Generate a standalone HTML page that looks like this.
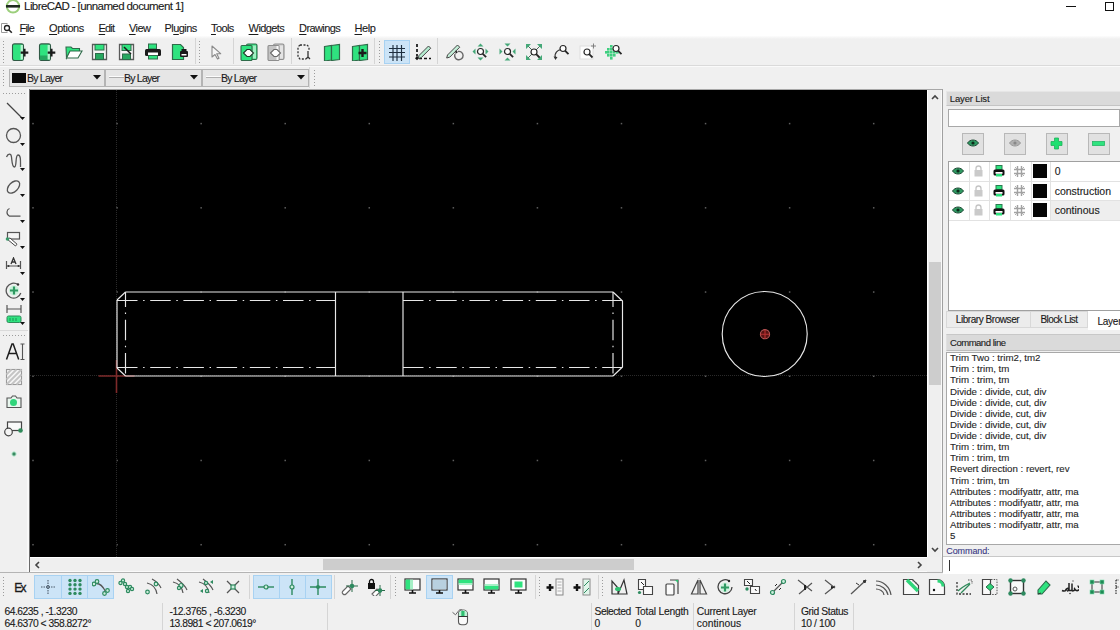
<!DOCTYPE html>
<html><head><meta charset="utf-8">
<style>
*{box-sizing:border-box}
html,body{margin:0;padding:0}
body{width:1120px;height:630px;overflow:hidden;position:relative;background:#f0f0f0;font-family:"Liberation Sans",sans-serif;font-size:11px;color:#000}
.a{position:absolute}
.t{position:absolute;white-space:nowrap;font-size:11px;letter-spacing:-0.3px;line-height:13px;color:#1a1a1a}
.mi u{text-decoration:underline}
.vs{position:absolute;width:1px;background:#d5d5d5}
.hdl{position:absolute;width:1px;background:repeating-linear-gradient(#9c9c9c 0 1px,transparent 1px 3px)}
.hhdl{position:absolute;height:1px;background:repeating-linear-gradient(90deg,#9c9c9c 0 1px,transparent 1px 3px)}
.hl{position:absolute;background:#cce4f7;border:1px solid #a8d2f2}
.cb{position:absolute;background:#e6e6e6;border:1px solid #b4b4b4}
.cmd{position:absolute;left:950px;font-size:9.5px;line-height:11.125px;color:#222;white-space:nowrap}
.st{position:absolute;font-size:10px;letter-spacing:-0.3px;line-height:12.5px;color:#222;white-space:nowrap}
</style></head><body>

<div class="a" style="left:0;top:0;width:1120px;height:39px;background:linear-gradient(#fff 0,#fff 35.5px,#f0f0f0 39px)"></div>
<svg class="a" style="left:5px;top:-1px" width="16" height="15" viewBox="0 0 16 15"><circle cx="8" cy="7.3" r="6.2" fill="none" stroke="#9ccf7c" stroke-width="2"/><rect x="1" y="6" width="14" height="2.6" fill="#1f2a1f"/></svg>
<div class="a" style="left:24.1px;top:1.27px;font-size:11.5px;line-height:11.5px;letter-spacing:-0.597px;color:#1a1a1a;white-space:nowrap;-webkit-text-stroke:0.12px currentColor">LibreCAD - [unnamed document 1]</div>
<div class="a" style="left:1066px;top:6px;width:10px;height:1px;background:#111"></div>
<div class="a" style="left:1105px;top:2px;width:9px;height:9px;border:1px solid #111"></div>
<svg class="a" style="left:1px;top:22px" width="13" height="12" viewBox="0 0 13 12"><path d="M0.5 1.5h6M0.5 1.5v9h6" fill="none" stroke="#9a9a9a"/><circle cx="6" cy="6" r="2.5" fill="none" stroke="#222" stroke-width="1.3"/><path d="M7.8 7.8l3 3" stroke="#222" stroke-width="1.6"/></svg>
<div class="a" style="left:19.6px;top:22.99px;font-size:11px;line-height:11px;letter-spacing:-0.842px;color:#1a1a1a;white-space:nowrap;text-underline-offset:1.5px;-webkit-text-stroke:0.1px currentColor"><u>F</u>ile</div>
<div class="a" style="left:49px;top:22.99px;font-size:11px;line-height:11px;letter-spacing:-0.435px;color:#1a1a1a;white-space:nowrap;text-underline-offset:1.5px;-webkit-text-stroke:0.1px currentColor"><u>O</u>ptions</div>
<div class="a" style="left:98.6px;top:22.99px;font-size:11px;line-height:11px;letter-spacing:-0.852px;color:#1a1a1a;white-space:nowrap;text-underline-offset:1.5px;-webkit-text-stroke:0.1px currentColor"><u>E</u>dit</div>
<div class="a" style="left:129px;top:22.99px;font-size:11px;line-height:11px;letter-spacing:-0.548px;color:#1a1a1a;white-space:nowrap;text-underline-offset:1.5px;-webkit-text-stroke:0.1px currentColor"><u>V</u>iew</div>
<div class="a" style="left:164.6px;top:22.99px;font-size:11px;line-height:11px;letter-spacing:-0.563px;color:#1a1a1a;white-space:nowrap;text-underline-offset:1.5px;-webkit-text-stroke:0.1px currentColor">Pl<u>u</u>gins</div>
<div class="a" style="left:211px;top:22.99px;font-size:11px;line-height:11px;letter-spacing:-0.595px;color:#1a1a1a;white-space:nowrap;text-underline-offset:1.5px;-webkit-text-stroke:0.1px currentColor"><u>T</u>ools</div>
<div class="a" style="left:248.6px;top:22.99px;font-size:11px;line-height:11px;letter-spacing:-0.589px;color:#1a1a1a;white-space:nowrap;text-underline-offset:1.5px;-webkit-text-stroke:0.1px currentColor"><u>W</u>idgets</div>
<div class="a" style="left:299.1px;top:22.99px;font-size:11px;line-height:11px;letter-spacing:-0.607px;color:#1a1a1a;white-space:nowrap;text-underline-offset:1.5px;-webkit-text-stroke:0.1px currentColor"><u>D</u>rawings</div>
<div class="a" style="left:354.5px;top:22.99px;font-size:11px;line-height:11px;letter-spacing:-0.408px;color:#1a1a1a;white-space:nowrap;text-underline-offset:1.5px;-webkit-text-stroke:0.1px currentColor"><u>H</u>elp</div>
<div class="a" style="left:0;top:65px;width:1120px;height:1px;background:#dadada"></div>
<div class="a" style="left:0;top:66px;width:1120px;height:1px;background:#fafafa"></div>
<div class="hdl" style="left:3px;top:41px;height:22px"></div>
<div class="vs" style="left:194.5px;top:38px;height:26px"></div>
<div class="vs" style="left:232.5px;top:38px;height:26px"></div>
<div class="vs" style="left:290.5px;top:38px;height:26px"></div>
<div class="vs" style="left:374px;top:38px;height:26px"></div>
<div class="vs" style="left:437px;top:38px;height:26px"></div>
<div class="hdl" style="left:199px;top:41px;height:22px"></div>
<div class="hdl" style="left:379px;top:41px;height:22px"></div>
<div class="hl" style="left:383.5px;top:39.5px;width:26px;height:24.5px"></div>
<svg class="a" style="left:11px;top:43px" width="18" height="18" viewBox="0 0 18 18"><rect x="1.5" y="0.9" width="11" height="16.6" rx="2" fill="#2fe37f" stroke="#2f5a45" stroke-width="1.1"/><rect x="9.6" y="2" width="2.3" height="14.5" fill="#b5f3cf"/><path d="M13.5 5.8v7.6M9.7 9.6h7.6" stroke="#1b1b1b" stroke-width="2.1"/></svg>
<svg class="a" style="left:38px;top:43px" width="18" height="18" viewBox="0 0 18 18"><rect x="1.5" y="0.9" width="11" height="16.6" rx="2" fill="#2fe37f" stroke="#2f5a45" stroke-width="1.1"/><rect x="2" y="12.5" width="10" height="4.5" fill="#25a860"/><rect x="9.6" y="2" width="2.3" height="14.5" fill="#b5f3cf"/><path d="M13.5 5.8v7.6M9.7 9.6h7.6" stroke="#1b1b1b" stroke-width="2.1"/></svg>
<svg class="a" style="left:65px;top:43px" width="18" height="18" viewBox="0 0 18 18"><path d="M1 4h5l1.5 1.5h7v3H5L1.5 15z" fill="#2fe37f" stroke="#2f6b4a" stroke-width="1.1"/><path d="M1.5 15l3.5-7h12l-4 7z" fill="#fff" stroke="#2f6b4a" stroke-width="1.1"/></svg>
<svg class="a" style="left:91px;top:43px" width="18" height="18" viewBox="0 0 18 18"><path d="M1.5 1.5h14v15h-14z" fill="#f4f4f4" stroke="#5a5a5a" stroke-width="1.3"/><rect x="4" y="1.5" width="9" height="5.5" fill="#2fe37f" stroke="#2f6b4a" stroke-width="1"/><rect x="4.5" y="10.5" width="8" height="6" fill="#27a860" stroke="#2f6b4a" stroke-width="1"/></svg>
<svg class="a" style="left:118px;top:43px" width="18" height="18" viewBox="0 0 18 18"><path d="M1.5 1.5h14v15h-14z" fill="#f4f4f4" stroke="#5a5a5a" stroke-width="1.3"/><rect x="4" y="1.5" width="9" height="6" fill="#2fe37f" stroke="#2f6b4a" stroke-width="1"/><rect x="4.5" y="11" width="8" height="5.5" fill="#27a860" stroke="#2f6b4a" stroke-width="1"/><path d="M6 4l7 7" stroke="#1b1b1b" stroke-width="1.5"/></svg>
<svg class="a" style="left:144px;top:43px" width="18" height="18" viewBox="0 0 18 18"><rect x="4.5" y="1" width="8" height="5" fill="#2fe37f" stroke="#2f6b4a"/><rect x="1" y="6" width="16" height="7" rx="1.5" fill="#1b1b1b"/><rect x="4" y="9.5" width="10" height="2.5" fill="#fff"/><rect x="4.5" y="12.5" width="9" height="3.5" fill="#2fe37f" stroke="#2f6b4a"/></svg>
<svg class="a" style="left:171px;top:43px" width="18" height="18" viewBox="0 0 18 18"><path d="M1.5 1.5h8l3 3v12h-11z" fill="#2fe37f" stroke="#2f6b4a" stroke-width="1.2"/><rect x="9" y="8" width="8" height="6" rx="1" fill="#1b1b1b"/><rect x="10.5" y="6" width="5" height="2.5" fill="#1b1b1b"/><rect x="10.5" y="11" width="5" height="1.5" fill="#fff"/></svg>
<svg class="a" style="left:207px;top:43px" width="18" height="18" viewBox="0 0 18 18"><path d="M5 3v11l3-2.5 2.5 4.5 1.5-.8-2.3-4.5h4z" fill="#f6f6f6" stroke="#8a8a8a" stroke-width="1.1" stroke-linejoin="round"/></svg>
<svg class="a" style="left:240px;top:43px" width="18" height="18" viewBox="0 0 18 18"><rect x="6.5" y="1" width="10.5" height="15.5" rx="1.5" fill="#2fe37f" stroke="#2f6b4a" stroke-width="1.1"/><rect x="12.5" y="2.5" width="3.5" height="13" fill="#9fefc2"/><rect x="1" y="2.5" width="11" height="15" rx="1" fill="#2fe37f" stroke="#2f6b4a" stroke-width="1.1"/><path d="M3.5 10l3.5-3.5h3L13.5 10 10 13.5H7z" fill="#fff" stroke="#1f3a2a" stroke-width="1.1"/></svg>
<svg class="a" style="left:267px;top:43px" width="18" height="18" viewBox="0 0 18 18"><rect x="6.5" y="1" width="10.5" height="15.5" rx="1.5" fill="#c8c8c8" stroke="#8e8e8e" stroke-width="1.1"/><rect x="12.5" y="2.5" width="3.5" height="13" fill="#e4e4e4"/><rect x="1" y="2.5" width="11" height="15" rx="1" fill="#c4c4c4" stroke="#8e8e8e" stroke-width="1.1"/><rect x="9.5" y="3" width="2" height="14" fill="#fafafa"/><path d="M3.5 10l3.5-3.5h3L13.5 10 10 13.5H7z" fill="#fff" stroke="#6a6a6a" stroke-width="1.1"/></svg>
<svg class="a" style="left:296px;top:43px" width="18" height="18" viewBox="0 0 18 18"><path d="M4 2h7l2 2v4M4 2l-2 2v10l2 2h6" fill="none" stroke="#333" stroke-width="1.3" stroke-dasharray="2 1.5"/><path d="M12 8v6M10 16l2-2 2 2" fill="none" stroke="#333" stroke-width="1.3"/></svg>
<svg class="a" style="left:323px;top:43px" width="18" height="18" viewBox="0 0 18 18"><path d="M1.5 3.5l7-1v14.5l-7 1z" fill="#2fe37f" stroke="#2f6b4a" stroke-width="1.2"/><path d="M8.5 2.5l8-1v15l-8 1z" fill="#2fe37f" stroke="#2f6b4a" stroke-width="1.2"/></svg>
<svg class="a" style="left:351px;top:43px" width="18" height="18" viewBox="0 0 18 18"><path d="M1.5 3.5l7-1v14.5l-7 1z" fill="#2fe37f" stroke="#2f6b4a" stroke-width="1.2"/><path d="M8.5 2.5l8-1v15l-8 1z" fill="#2fe37f" stroke="#2f6b4a" stroke-width="1.2"/><path d="M11.5 6v8M7.5 10h8" stroke="#1b1b1b" stroke-width="2.4"/></svg>
<svg class="a" style="left:388px;top:43px" width="18" height="18" viewBox="0 0 18 18"><path d="M5 2v16M9 2v16M13.5 2v16M1 5.5h16M1 9.5h16M1 14h16" stroke="#1e2e3e" stroke-width="1.15"/></svg>
<svg class="a" style="left:414px;top:43px" width="18" height="18" viewBox="0 0 18 18"><path d="M3 1v12.5M5 15.5h12" fill="none" stroke="#111" stroke-width="1.7" stroke-dasharray="3 2"/><path d="M3 13.3l2 2-2 2-2-2z" fill="#111"/><path d="M5 12.5l9.5-9.5 2.2 2.2-9.5 9.5-3 .8z" fill="#b5ecd0" stroke="#444" stroke-width="1"/></svg>
<svg class="a" style="left:446px;top:43px" width="18" height="18" viewBox="0 0 18 18"><path d="M1.5 12l10-10 2.2 2.2-10 10-3 .8z" fill="#c4eed8" stroke="#444" stroke-width="1"/><path d="M9 11a4.2 4.2 0 1 0 3-2.5" fill="none" stroke="#666" stroke-width="1.4"/><path d="M9.5 7.5l2.5 1.5-2.5 2z" fill="#1b1b1b"/></svg>
<svg class="a" style="left:472px;top:43px" width="18" height="18" viewBox="0 0 18 18"><path d="M8.5 0.5l3 3h-6zM8.5 17.5l3-3h-6zM0.5 8.5l3-3v6zM16.5 8.5l-3-3v6z" fill="#45a878"/><circle cx="8.5" cy="8.5" r="3.0" fill="#fdfdfd" stroke="#262626" stroke-width="1.2"/><path d="M10.8 10.8l3.3 3.3" stroke="#262626" stroke-width="1.8"/></svg>
<svg class="a" style="left:499px;top:43px" width="18" height="18" viewBox="0 0 18 18"><path d="M8.5 3.5l3-3h-6zM8.5 14.5l3 3h-6zM3.5 8.5l-3-3v6zM13.5 8.5l3-3v6z" fill="#45a878"/><circle cx="8.5" cy="8.5" r="3.0" fill="#fdfdfd" stroke="#262626" stroke-width="1.2"/><path d="M10.8 10.8l3.3 3.3" stroke="#262626" stroke-width="1.8"/></svg>
<svg class="a" style="left:525px;top:43px" width="18" height="18" viewBox="0 0 18 18"><path d="M3 3l12 12M15 3L3 15" stroke="#4a6a5a" stroke-width="1"/><path d="M1 1h5l-5 5zM17 1v5l-5-5zM1 17v-5l5 5zM17 17h-5l5-5z" fill="#45a878"/><circle cx="9" cy="9" r="3.0" fill="#fdfdfd" stroke="#262626" stroke-width="1.2"/><path d="M11.2 11.2l3.3 3.3" stroke="#262626" stroke-width="1.8"/></svg>
<svg class="a" style="left:552px;top:43px" width="18" height="18" viewBox="0 0 18 18"><path d="M3.5 15a6 6 0 0 1 7-8" fill="none" stroke="#333" stroke-width="1.1"/><path d="M1.5 13.5l2 3.5 2-3z" fill="#333"/><circle cx="11" cy="5.5" r="3.0" fill="#fdfdfd" stroke="#262626" stroke-width="1.2"/><path d="M13.2 7.8l3.3 3.3" stroke="#262626" stroke-width="1.8"/></svg>
<svg class="a" style="left:579px;top:43px" width="18" height="18" viewBox="0 0 18 18"><rect x="1" y="3" width="13" height="13" fill="#fdfdfd" stroke="#dedede"/><path d="M14.5 0.5v5M12 3h5" stroke="#777" stroke-width="0.9"/><circle cx="8" cy="9" r="3.0" fill="#fdfdfd" stroke="#262626" stroke-width="1.2"/><path d="M10.2 11.2l3.3 3.3" stroke="#262626" stroke-width="1.8"/></svg>
<svg class="a" style="left:605px;top:43px" width="18" height="18" viewBox="0 0 18 18"><rect x="5" y="2" width="2.6" height="2.6" fill="#3fcf80"/><rect x="5" y="5" width="2.6" height="2.6" fill="#3fcf80"/><rect x="5" y="8" width="2.6" height="2.6" fill="#3fcf80"/><rect x="5" y="11" width="2.6" height="2.6" fill="#3fcf80"/><rect x="5" y="14" width="2.6" height="2.6" fill="#3fcf80"/><rect x="2" y="8" width="2.6" height="2.6" fill="#3fcf80"/><rect x="8" y="8" width="2.6" height="2.6" fill="#3fcf80"/><rect x="11" y="8" width="2.6" height="2.6" fill="#3fcf80"/><rect x="-0.5" y="8" width="2.6" height="2.6" fill="#3fcf80"/><rect x="2" y="5" width="2.6" height="2.6" fill="#3fcf80"/><rect x="8" y="5" width="2.6" height="2.6" fill="#3fcf80"/><rect x="2" y="11" width="2.6" height="2.6" fill="#3fcf80"/><rect x="8" y="11" width="2.6" height="2.6" fill="#3fcf80"/><circle cx="11" cy="5.5" r="3.0" fill="#fdfdfd" stroke="#262626" stroke-width="1.2"/><path d="M13.2 7.8l3.3 3.3" stroke="#262626" stroke-width="1.8"/></svg>
<div class="hdl" style="left:3px;top:70px;height:16px"></div>
<div class="hdl" style="left:314px;top:70px;height:16px"></div>
<div class="a" style="left:309px;top:67px;width:1px;height:21px;background:#dadada"></div>
<div class="cb" style="left:8.5px;top:68.5px;width:96.0px;height:18.5px"></div>
<div class="a" style="left:11.5px;top:73px;width:14px;height:10px;background:#0a0a0a"></div>
<div class="a" style="left:27.0px;top:73.41px;font-size:10.5px;line-height:10.5px;letter-spacing:-0.777px;color:#1a1a1a;white-space:nowrap;-webkit-text-stroke:0.12px currentColor">By Layer</div>
<svg class="a" style="left:92.5px;top:75px" width="8" height="5" viewBox="0 0 8 5"><path d="M0 0h8l-4 4.5z" fill="#111"/></svg>
<div class="cb" style="left:104.5px;top:68.5px;width:97.0px;height:18.5px"></div>
<div class="a" style="left:108.5px;top:76px;width:15px;height:2px;background:#fcfcfc;border-bottom:1px solid #b0b0b0"></div>
<div class="a" style="left:124.0px;top:73.41px;font-size:10.5px;line-height:10.5px;letter-spacing:-0.777px;color:#1a1a1a;white-space:nowrap;-webkit-text-stroke:0.12px currentColor">By Layer</div>
<svg class="a" style="left:189.5px;top:75px" width="8" height="5" viewBox="0 0 8 5"><path d="M0 0h8l-4 4.5z" fill="#111"/></svg>
<div class="cb" style="left:201.5px;top:68.5px;width:107.0px;height:18.5px"></div>
<div class="a" style="left:205.5px;top:76px;width:15px;height:2px;background:#fcfcfc;border-bottom:1px solid #b0b0b0"></div>
<div class="a" style="left:221.0px;top:73.41px;font-size:10.5px;line-height:10.5px;letter-spacing:-0.777px;color:#1a1a1a;white-space:nowrap;-webkit-text-stroke:0.12px currentColor">By Layer</div>
<svg class="a" style="left:296.5px;top:75px" width="8" height="5" viewBox="0 0 8 5"><path d="M0 0h8l-4 4.5z" fill="#111"/></svg>
<div class="a" style="left:27px;top:89px;width:2px;height:484px;background:#f8f8f8"></div>
<div class="hhdl" style="left:3px;top:93px;width:23px"></div>
<div class="a" style="left:0;top:330px;width:28px;height:1px;background:#dadada"></div>
<div class="hhdl" style="left:3px;top:335px;width:23px"></div>
<svg class="a" style="left:5px;top:101px" width="20" height="20" viewBox="0 0 20 20"><path d="M2 2l15 15" stroke="#444" stroke-width="1.3"/></svg>
<svg class="a" style="left:20px;top:117px" width="5" height="3" viewBox="0 0 5 3"><path d="M0 0h5l-2.5 3z" fill="#111"/></svg>
<svg class="a" style="left:5px;top:127px" width="20" height="20" viewBox="0 0 20 20"><circle cx="8.5" cy="8.5" r="7" fill="none" stroke="#555" stroke-width="1.3"/></svg>
<svg class="a" style="left:20px;top:143px" width="5" height="3" viewBox="0 0 5 3"><path d="M0 0h5l-2.5 3z" fill="#111"/></svg>
<svg class="a" style="left:5px;top:152px" width="20" height="20" viewBox="0 0 20 20"><path d="M1.5 5C3 1.5 6 1 6.5 5S7 15 9.5 15 10 3 13 3s2.5 6 2.5 12" fill="none" stroke="#555" stroke-width="1.3"/></svg>
<svg class="a" style="left:20px;top:168px" width="5" height="3" viewBox="0 0 5 3"><path d="M0 0h5l-2.5 3z" fill="#111"/></svg>
<svg class="a" style="left:5px;top:179px" width="20" height="20" viewBox="0 0 20 20"><ellipse cx="8.5" cy="8" rx="7.5" ry="4.5" transform="rotate(-45 8.5 8)" fill="none" stroke="#555" stroke-width="1.3"/></svg>
<svg class="a" style="left:20px;top:194px" width="5" height="3" viewBox="0 0 5 3"><path d="M0 0h5l-2.5 3z" fill="#111"/></svg>
<svg class="a" style="left:5px;top:207px" width="20" height="14" viewBox="0 0 20 14"><path d="M4.5 1.5C1.5 2.5 0.8 7.5 4.5 9.2h11" fill="none" stroke="#555" stroke-width="1.2"/></svg>
<svg class="a" style="left:20px;top:220px" width="5" height="3" viewBox="0 0 5 3"><path d="M0 0h5l-2.5 3z" fill="#111"/></svg>
<svg class="a" style="left:5px;top:231px" width="20" height="18" viewBox="0 0 20 18"><rect x="2.5" y="1.5" width="12" height="6.5" fill="#f4f4f4" stroke="#555" stroke-width="1.2"/><path d="M2 8l8.5 7 1.5-1.8L5 7z" fill="#fff" stroke="#444" stroke-width="1"/><circle cx="2.5" cy="8" r="1.8" fill="#3a9a6a"/></svg>
<svg class="a" style="left:20px;top:246px" width="5" height="3" viewBox="0 0 5 3"><path d="M0 0h5l-2.5 3z" fill="#111"/></svg>
<svg class="a" style="left:5px;top:257px" width="20" height="15" viewBox="0 0 20 15"><path d="M1.5 4v8M15.5 4v8M1.5 9h14" stroke="#555" stroke-width="1.2"/><path d="M6 7l2.5-6 2.5 6M7 5h3" fill="none" stroke="#333" stroke-width="1.3"/><circle cx="3.5" cy="9" r="1" fill="#333"/><circle cx="13.5" cy="9" r="1" fill="#333"/></svg>
<svg class="a" style="left:20px;top:272px" width="5" height="3" viewBox="0 0 5 3"><path d="M0 0h5l-2.5 3z" fill="#111"/></svg>
<svg class="a" style="left:5px;top:282px" width="20" height="17" viewBox="0 0 20 17"><path d="M13 2.5A7.5 7.5 0 1 0 15.8 11" fill="none" stroke="#555" stroke-width="1.3"/><circle cx="9" cy="8.5" r="5" fill="#c8f1da"/><path d="M9 4.5v8M5 8.5h8" stroke="#2f9a62" stroke-width="2.2"/><circle cx="13" cy="2.5" r="1.2" fill="#333"/></svg>
<svg class="a" style="left:20px;top:298px" width="5" height="3" viewBox="0 0 5 3"><path d="M0 0h5l-2.5 3z" fill="#111"/></svg>
<svg class="a" style="left:5px;top:304px" width="20" height="20" viewBox="0 0 20 20"><path d="M2 1v8M16 1v8M2 5h14" stroke="#555" stroke-width="1.2"/><rect x="2" y="12" width="14" height="6.5" rx="1.5" fill="#2fe37f" stroke="#2f8a5a"/><path d="M5 14v3M8 14v3M11 14v3" stroke="#1a7a4a" stroke-width="0.8"/></svg>
<svg class="a" style="left:20px;top:322px" width="5" height="3" viewBox="0 0 5 3"><path d="M0 0h5l-2.5 3z" fill="#111"/></svg>
<svg class="a" style="left:5px;top:342px" width="20" height="19" viewBox="0 0 20 19"><path d="M1.5 17.5L7 2h1.2l5.5 15.5M3.8 11.5h7.5" fill="none" stroke="#1e1e1e" stroke-width="1.5"/><path d="M15.5 2h4M17.5 2v15.5M15.5 17.5h4" fill="none" stroke="#555" stroke-width="1.1"/></svg>
<svg class="a" style="left:5px;top:368px" width="18" height="18" viewBox="0 0 18 18"><rect x="1.5" y="1.5" width="15" height="15" fill="#f6f6f6" stroke="#9a9a9a" stroke-width="1.1"/><path d="M1.5 6.5l5-5M1.5 11.5l10-10M1.5 16.5l15-15M6.5 16.5l10-10M11.5 16.5l5-5" stroke="#c4c4c4" stroke-width="1.8"/></svg>
<svg class="a" style="left:6px;top:395px" width="16" height="13" viewBox="0 0 16 13"><path d="M1 3h4l1.5-2h3l1.5 2h4v9.5H1z" fill="#e9f7ef" stroke="#555" stroke-width="1.1"/><circle cx="7.5" cy="7.5" r="3.5" fill="#2fd57a"/></svg>
<svg class="a" style="left:4px;top:421px" width="20" height="16" viewBox="0 0 20 16"><rect x="3.5" y="1" width="14" height="8.5" fill="#fafafa" stroke="#444" stroke-width="1.2"/><circle cx="4.5" cy="11" r="3.8" fill="#f4f4f4" stroke="#444" stroke-width="1.2"/><circle cx="16.5" cy="9.5" r="2.3" fill="#2f8a5a"/></svg>
<svg class="a" style="left:10px;top:450px" width="8" height="8" viewBox="0 0 8 8"><circle cx="4" cy="4" r="2.2" fill="#3a8a62" stroke="#bfeed5" stroke-width="1"/></svg>
<div class="a" style="left:30px;top:89px;width:897px;height:468px;background:#000"></div>
<svg class="a" style="left:30px;top:90px" width="897" height="467" viewBox="30 90 897 467">
<rect x="32.25" y="122.85" width="1.5" height="1.5" fill="#5e5e5e"/>
<rect x="32.25" y="207.07" width="1.5" height="1.5" fill="#5e5e5e"/>
<rect x="32.25" y="291.29" width="1.5" height="1.5" fill="#5e5e5e"/>
<rect x="32.25" y="375.51" width="1.5" height="1.5" fill="#5e5e5e"/>
<rect x="32.25" y="459.73" width="1.5" height="1.5" fill="#5e5e5e"/>
<rect x="32.25" y="543.95" width="1.5" height="1.5" fill="#5e5e5e"/>
<rect x="116.32" y="122.85" width="1.5" height="1.5" fill="#5e5e5e"/>
<rect x="116.32" y="207.07" width="1.5" height="1.5" fill="#5e5e5e"/>
<rect x="116.32" y="291.29" width="1.5" height="1.5" fill="#5e5e5e"/>
<rect x="116.32" y="375.51" width="1.5" height="1.5" fill="#5e5e5e"/>
<rect x="116.32" y="459.73" width="1.5" height="1.5" fill="#5e5e5e"/>
<rect x="116.32" y="543.95" width="1.5" height="1.5" fill="#5e5e5e"/>
<rect x="200.39" y="122.85" width="1.5" height="1.5" fill="#5e5e5e"/>
<rect x="200.39" y="207.07" width="1.5" height="1.5" fill="#5e5e5e"/>
<rect x="200.39" y="291.29" width="1.5" height="1.5" fill="#5e5e5e"/>
<rect x="200.39" y="375.51" width="1.5" height="1.5" fill="#5e5e5e"/>
<rect x="200.39" y="459.73" width="1.5" height="1.5" fill="#5e5e5e"/>
<rect x="200.39" y="543.95" width="1.5" height="1.5" fill="#5e5e5e"/>
<rect x="284.46" y="122.85" width="1.5" height="1.5" fill="#5e5e5e"/>
<rect x="284.46" y="207.07" width="1.5" height="1.5" fill="#5e5e5e"/>
<rect x="284.46" y="291.29" width="1.5" height="1.5" fill="#5e5e5e"/>
<rect x="284.46" y="375.51" width="1.5" height="1.5" fill="#5e5e5e"/>
<rect x="284.46" y="459.73" width="1.5" height="1.5" fill="#5e5e5e"/>
<rect x="284.46" y="543.95" width="1.5" height="1.5" fill="#5e5e5e"/>
<rect x="368.53" y="122.85" width="1.5" height="1.5" fill="#5e5e5e"/>
<rect x="368.53" y="207.07" width="1.5" height="1.5" fill="#5e5e5e"/>
<rect x="368.53" y="291.29" width="1.5" height="1.5" fill="#5e5e5e"/>
<rect x="368.53" y="375.51" width="1.5" height="1.5" fill="#5e5e5e"/>
<rect x="368.53" y="459.73" width="1.5" height="1.5" fill="#5e5e5e"/>
<rect x="368.53" y="543.95" width="1.5" height="1.5" fill="#5e5e5e"/>
<rect x="452.60" y="122.85" width="1.5" height="1.5" fill="#5e5e5e"/>
<rect x="452.60" y="207.07" width="1.5" height="1.5" fill="#5e5e5e"/>
<rect x="452.60" y="291.29" width="1.5" height="1.5" fill="#5e5e5e"/>
<rect x="452.60" y="375.51" width="1.5" height="1.5" fill="#5e5e5e"/>
<rect x="452.60" y="459.73" width="1.5" height="1.5" fill="#5e5e5e"/>
<rect x="452.60" y="543.95" width="1.5" height="1.5" fill="#5e5e5e"/>
<rect x="536.67" y="122.85" width="1.5" height="1.5" fill="#5e5e5e"/>
<rect x="536.67" y="207.07" width="1.5" height="1.5" fill="#5e5e5e"/>
<rect x="536.67" y="291.29" width="1.5" height="1.5" fill="#5e5e5e"/>
<rect x="536.67" y="375.51" width="1.5" height="1.5" fill="#5e5e5e"/>
<rect x="536.67" y="459.73" width="1.5" height="1.5" fill="#5e5e5e"/>
<rect x="536.67" y="543.95" width="1.5" height="1.5" fill="#5e5e5e"/>
<rect x="620.74" y="122.85" width="1.5" height="1.5" fill="#5e5e5e"/>
<rect x="620.74" y="207.07" width="1.5" height="1.5" fill="#5e5e5e"/>
<rect x="620.74" y="291.29" width="1.5" height="1.5" fill="#5e5e5e"/>
<rect x="620.74" y="375.51" width="1.5" height="1.5" fill="#5e5e5e"/>
<rect x="620.74" y="459.73" width="1.5" height="1.5" fill="#5e5e5e"/>
<rect x="620.74" y="543.95" width="1.5" height="1.5" fill="#5e5e5e"/>
<rect x="704.81" y="122.85" width="1.5" height="1.5" fill="#5e5e5e"/>
<rect x="704.81" y="207.07" width="1.5" height="1.5" fill="#5e5e5e"/>
<rect x="704.81" y="291.29" width="1.5" height="1.5" fill="#5e5e5e"/>
<rect x="704.81" y="375.51" width="1.5" height="1.5" fill="#5e5e5e"/>
<rect x="704.81" y="459.73" width="1.5" height="1.5" fill="#5e5e5e"/>
<rect x="704.81" y="543.95" width="1.5" height="1.5" fill="#5e5e5e"/>
<rect x="788.88" y="122.85" width="1.5" height="1.5" fill="#5e5e5e"/>
<rect x="788.88" y="207.07" width="1.5" height="1.5" fill="#5e5e5e"/>
<rect x="788.88" y="291.29" width="1.5" height="1.5" fill="#5e5e5e"/>
<rect x="788.88" y="375.51" width="1.5" height="1.5" fill="#5e5e5e"/>
<rect x="788.88" y="459.73" width="1.5" height="1.5" fill="#5e5e5e"/>
<rect x="788.88" y="543.95" width="1.5" height="1.5" fill="#5e5e5e"/>
<rect x="872.95" y="122.85" width="1.5" height="1.5" fill="#5e5e5e"/>
<rect x="872.95" y="207.07" width="1.5" height="1.5" fill="#5e5e5e"/>
<rect x="872.95" y="291.29" width="1.5" height="1.5" fill="#5e5e5e"/>
<rect x="872.95" y="375.51" width="1.5" height="1.5" fill="#5e5e5e"/>
<rect x="872.95" y="459.73" width="1.5" height="1.5" fill="#5e5e5e"/>
<rect x="872.95" y="543.95" width="1.5" height="1.5" fill="#5e5e5e"/>
<path d="M116.5 90V557" stroke="#2a2a2a" stroke-width="1" stroke-dasharray="1 1"/>
<path d="M30 375.5H927" stroke="#2a2a2a" stroke-width="1" stroke-dasharray="1 1"/>
<path d="M98.5 376H134.5M116.5 360V393" stroke="#7e2a2a" stroke-width="1.6"/>
<path d="M125.5 292H613M117 300V368M125.5 376H613M622.5 301V367M117 300L125.5 292M117 368L125.5 376M613 292L622.5 301M613 376L622.5 367M335.5 292V376M403 292V376" fill="none" stroke="#e8e8e8" stroke-width="1.15"/>
<path d="M117 300.5H335.5M403 300.5H622.5M117 367.5H335.5M403 367.5H622.5" fill="none" stroke="#e8e8e8" stroke-width="1.15" stroke-dasharray="20.5 5.6 1.5 5.6"/>
<path d="M125.5 292V376M613 292V376" fill="none" stroke="#e8e8e8" stroke-width="1.15" stroke-dasharray="20.5 5.6 1.5 5.6" stroke-dashoffset="5.5"/>
<circle cx="764.7" cy="334" r="42.5" fill="none" stroke="#e8e8e8" stroke-width="1.15"/>
<circle cx="765" cy="334.2" r="4.6" fill="#5a1414" stroke="#b85858" stroke-width="1.1"/><path d="M760.5 334.2h9M765 329.7v9" stroke="#b83030" stroke-width="1.1"/>
</svg>
<div class="a" style="left:927px;top:89px;width:15px;height:468px;background:#efefef;border-left:1px solid #fff;border-right:1px solid #fafafa;border-top:1px solid #fff"></div>
<div class="a" style="left:929px;top:261.5px;width:12px;height:123px;background:#cdcdcd"></div>
<svg class="a" style="left:931px;top:94px" width="8" height="6" viewBox="0 0 8 6"><path d="M1 5l3-3 3 3" fill="none" stroke="#444" stroke-width="1.6"/></svg>
<svg class="a" style="left:931px;top:547px" width="8" height="6" viewBox="0 0 8 6"><path d="M1 1l3 3 3-3" fill="none" stroke="#444" stroke-width="1.6"/></svg>
<div class="a" style="left:30px;top:557px;width:897px;height:15px;background:#efefef;border-top:1px solid #fff;border-bottom:1px solid #fafafa"></div>
<div class="a" style="left:927px;top:557px;width:15px;height:15px;background:#f0f0f0"></div>
<div class="a" style="left:323px;top:558.5px;width:311px;height:11.5px;background:#cdcdcd"></div>
<svg class="a" style="left:34px;top:561px" width="6" height="8" viewBox="0 0 6 8"><path d="M5 1L2 4l3 3" fill="none" stroke="#444" stroke-width="1.6"/></svg>
<svg class="a" style="left:917px;top:561px" width="6" height="8" viewBox="0 0 6 8"><path d="M1 1l3 3-3 3" fill="none" stroke="#444" stroke-width="1.6"/></svg>
<div class="a" style="left:29px;top:88.5px;width:914px;height:1px;background:#a8a8a8"></div>
<div class="a" style="left:29px;top:89px;width:1px;height:484px;background:#6a6a6a"></div>
<div class="a" style="left:942px;top:89px;width:1px;height:484px;background:#a0a0a0"></div>
<div class="a" style="left:29px;top:571.5px;width:914px;height:1px;background:#a0a0a0"></div>
<div class="a" style="left:945.5px;top:90.5px;width:175px;height:15px;background:#dadada;border-top:1px solid #e6e6e6;border-left:1px solid #e6e6e6;border-bottom:1px solid #c4c4c4"></div>
<div class="a" style="left:949.8px;top:94.26px;font-size:9.5px;line-height:9.5px;letter-spacing:-0.154px;color:#1a1a1a;white-space:nowrap;-webkit-text-stroke:0.12px currentColor">Layer List</div>
<div class="a" style="left:948px;top:109px;width:172px;height:18px;background:#fff;border:1px solid #a8a8a8"></div>
<div class="a" style="left:961.5px;top:132.5px;width:22px;height:22px;background:#e1e1e1;border:1px solid #b8b8b8"></div>
<svg class="a" style="left:966.5px;top:139.0px" width="12" height="8" viewBox="0 0 12 8"><path d="M0.5 4C3 0 9 0 11.5 4 9 8 3 8 0.5 4z" fill="#2e9a62" stroke="#1f4a35" stroke-width="1"/><circle cx="6" cy="4" r="1.6" fill="#0d2a1a"/></svg>
<div class="a" style="left:1003.5px;top:132.5px;width:22px;height:22px;background:#e1e1e1;border:1px solid #b8b8b8"></div>
<svg class="a" style="left:1008.5px;top:139px" width="12" height="8" viewBox="0 0 12 8"><path d="M0.5 4C3 0 9 0 11.5 4 9 8 3 8 0.5 4z" fill="#b0b0b0" stroke="#9a9a9a" stroke-width="1"/><circle cx="6" cy="4" r="1.6" fill="#888"/></svg>
<div class="a" style="left:1045.5px;top:132.5px;width:22px;height:22px;background:#e1e1e1;border:1px solid #b8b8b8"></div>
<svg class="a" style="left:1050.0px;top:137px" width="13" height="13" viewBox="0 0 13 13"><path d="M4.5 1h4v3.5H12v4H8.5V12h-4V8.5H1v-4h3.5z" fill="#1fe070" stroke="#22b05a" stroke-width="0.8"/></svg>
<div class="a" style="left:1087.5px;top:132.5px;width:22px;height:22px;background:#e1e1e1;border:1px solid #b8b8b8"></div>
<svg class="a" style="left:1092.0px;top:141px" width="13" height="5" viewBox="0 0 13 5"><rect x="0.5" y="0.5" width="12" height="4" fill="#2fe37f" stroke="#26b565" stroke-width="0.8"/></svg>
<div class="a" style="left:948px;top:161px;width:172px;height:149.5px;background:#fff;border:1px solid #a0a0a0;border-right:none"></div>
<div class="a" style="left:949px;top:180.7px;width:171px;height:1px;background:#e2e2e2"></div>
<div class="a" style="left:968.5px;top:161.5px;width:1px;height:19.5px;background:#e2e2e2"></div>
<div class="a" style="left:989px;top:161.5px;width:1px;height:19.5px;background:#e2e2e2"></div>
<div class="a" style="left:1009.5px;top:161.5px;width:1px;height:19.5px;background:#e2e2e2"></div>
<div class="a" style="left:1030.5px;top:161.5px;width:1px;height:19.5px;background:#e2e2e2"></div>
<div class="a" style="left:1050px;top:161.5px;width:1px;height:19.5px;background:#e2e2e2"></div>
<svg class="a" style="left:952px;top:167.0px" width="12" height="8" viewBox="0 0 12 8"><path d="M0.5 4C3 0 9 0 11.5 4 9 8 3 8 0.5 4z" fill="#2e9a62" stroke="#1f4a35" stroke-width="1"/><circle cx="6" cy="4" r="1.6" fill="#0d2a1a"/></svg>
<svg class="a" style="left:974px;top:165.0px" width="9" height="12" viewBox="0 0 9 12"><path d="M2 5V3.5a2.5 2.5 0 0 1 5 0V5" fill="none" stroke="#c4c4c4" stroke-width="1.3"/><rect x="0.5" y="5" width="8" height="6.5" fill="#cacaca"/></svg>
<svg class="a" style="left:993px;top:165.0px" width="12" height="12" viewBox="0 0 12 12"><rect x="3" y="0.5" width="6" height="4" fill="#2fe37f" stroke="#2a7a50"/><rect x="0.5" y="4.5" width="11" height="6" rx="1.5" fill="#111"/><rect x="2.5" y="7" width="7" height="1.8" fill="#fff"/><rect x="3" y="9" width="6" height="2.5" fill="#2fe37f"/></svg>
<svg class="a" style="left:1013px;top:164.5px" width="13" height="13" viewBox="0 0 13 13"><path d="M4.5 1v11M8.5 1v11M1 4.5h11M1 8.5h11" stroke="#a2a2a2" stroke-width="1.4"/><path d="M2 2l2 2M11 2l-2 2M2 11l2-2M11 11l-2-2" stroke="#b0b0b0" stroke-width="1"/></svg>
<div class="a" style="left:1033px;top:164.0px;width:14px;height:14px;background:#050505"></div>
<div class="a" style="left:1054.7px;top:165.91px;font-size:10.5px;line-height:10.5px;letter-spacing:0px;color:#1a1a1a;white-space:nowrap;-webkit-text-stroke:0.12px currentColor">0</div>
<div class="a" style="left:949px;top:200.3px;width:171px;height:1px;background:#e2e2e2"></div>
<div class="a" style="left:968.5px;top:181.1px;width:1px;height:19.5px;background:#e2e2e2"></div>
<div class="a" style="left:989px;top:181.1px;width:1px;height:19.5px;background:#e2e2e2"></div>
<div class="a" style="left:1009.5px;top:181.1px;width:1px;height:19.5px;background:#e2e2e2"></div>
<div class="a" style="left:1030.5px;top:181.1px;width:1px;height:19.5px;background:#e2e2e2"></div>
<div class="a" style="left:1050px;top:181.1px;width:1px;height:19.5px;background:#e2e2e2"></div>
<svg class="a" style="left:952px;top:186.6px" width="12" height="8" viewBox="0 0 12 8"><path d="M0.5 4C3 0 9 0 11.5 4 9 8 3 8 0.5 4z" fill="#2e9a62" stroke="#1f4a35" stroke-width="1"/><circle cx="6" cy="4" r="1.6" fill="#0d2a1a"/></svg>
<svg class="a" style="left:974px;top:184.6px" width="9" height="12" viewBox="0 0 9 12"><path d="M2 5V3.5a2.5 2.5 0 0 1 5 0V5" fill="none" stroke="#c4c4c4" stroke-width="1.3"/><rect x="0.5" y="5" width="8" height="6.5" fill="#cacaca"/></svg>
<svg class="a" style="left:993px;top:184.6px" width="12" height="12" viewBox="0 0 12 12"><rect x="3" y="0.5" width="6" height="4" fill="#2fe37f" stroke="#2a7a50"/><rect x="0.5" y="4.5" width="11" height="6" rx="1.5" fill="#111"/><rect x="2.5" y="7" width="7" height="1.8" fill="#fff"/><rect x="3" y="9" width="6" height="2.5" fill="#2fe37f"/></svg>
<svg class="a" style="left:1013px;top:184.1px" width="13" height="13" viewBox="0 0 13 13"><path d="M4.5 1v11M8.5 1v11M1 4.5h11M1 8.5h11" stroke="#a2a2a2" stroke-width="1.4"/><path d="M2 2l2 2M11 2l-2 2M2 11l2-2M11 11l-2-2" stroke="#b0b0b0" stroke-width="1"/></svg>
<div class="a" style="left:1033px;top:183.6px;width:14px;height:14px;background:#050505"></div>
<div class="a" style="left:1054.7px;top:185.51px;font-size:10.5px;line-height:10.5px;letter-spacing:-0.028px;color:#1a1a1a;white-space:nowrap;-webkit-text-stroke:0.12px currentColor">construction</div>
<div class="a" style="left:1050px;top:200.7px;width:70px;height:19.5px;background:#eeeeee"></div>
<div class="a" style="left:949px;top:219.9px;width:171px;height:1px;background:#e2e2e2"></div>
<div class="a" style="left:968.5px;top:200.7px;width:1px;height:19.5px;background:#e2e2e2"></div>
<div class="a" style="left:989px;top:200.7px;width:1px;height:19.5px;background:#e2e2e2"></div>
<div class="a" style="left:1009.5px;top:200.7px;width:1px;height:19.5px;background:#e2e2e2"></div>
<div class="a" style="left:1030.5px;top:200.7px;width:1px;height:19.5px;background:#e2e2e2"></div>
<div class="a" style="left:1050px;top:200.7px;width:1px;height:19.5px;background:#e2e2e2"></div>
<svg class="a" style="left:952px;top:206.2px" width="12" height="8" viewBox="0 0 12 8"><path d="M0.5 4C3 0 9 0 11.5 4 9 8 3 8 0.5 4z" fill="#2e9a62" stroke="#1f4a35" stroke-width="1"/><circle cx="6" cy="4" r="1.6" fill="#0d2a1a"/></svg>
<svg class="a" style="left:974px;top:204.2px" width="9" height="12" viewBox="0 0 9 12"><path d="M2 5V3.5a2.5 2.5 0 0 1 5 0V5" fill="none" stroke="#c4c4c4" stroke-width="1.3"/><rect x="0.5" y="5" width="8" height="6.5" fill="#cacaca"/></svg>
<svg class="a" style="left:993px;top:204.2px" width="12" height="12" viewBox="0 0 12 12"><rect x="3" y="0.5" width="6" height="4" fill="#2fe37f" stroke="#2a7a50"/><rect x="0.5" y="4.5" width="11" height="6" rx="1.5" fill="#111"/><rect x="2.5" y="7" width="7" height="1.8" fill="#fff"/><rect x="3" y="9" width="6" height="2.5" fill="#2fe37f"/></svg>
<svg class="a" style="left:1013px;top:203.7px" width="13" height="13" viewBox="0 0 13 13"><path d="M4.5 1v11M8.5 1v11M1 4.5h11M1 8.5h11" stroke="#a2a2a2" stroke-width="1.4"/><path d="M2 2l2 2M11 2l-2 2M2 11l2-2M11 11l-2-2" stroke="#b0b0b0" stroke-width="1"/></svg>
<div class="a" style="left:1033px;top:203.2px;width:14px;height:14px;background:#050505"></div>
<div class="a" style="left:1054.7px;top:205.11px;font-size:10.5px;line-height:10.5px;letter-spacing:0px;color:#1a1a1a;white-space:nowrap;-webkit-text-stroke:0.12px currentColor">continous</div>
<div class="a" style="left:946px;top:311px;width:85px;height:17px;background:#ececec;border:1px solid #d8d8d8"></div>
<div class="a" style="left:1031px;top:311px;width:57px;height:17px;background:#ececec;border:1px solid #d8d8d8;border-left:none"></div>
<div class="a" style="left:1088px;top:310.5px;width:32px;height:19px;background:#fff"></div>
<div class="a" style="left:955.8px;top:315.44px;font-size:10px;line-height:10px;letter-spacing:-0.444px;color:#1a1a1a;white-space:nowrap;-webkit-text-stroke:0.12px currentColor">Library Browser</div>
<div class="a" style="left:1040.5px;top:315.44px;font-size:10px;line-height:10px;letter-spacing:-0.588px;color:#1a1a1a;white-space:nowrap;-webkit-text-stroke:0.12px currentColor">Block List</div>
<div class="a" style="left:1097.5px;top:316.54px;font-size:10px;line-height:10px;letter-spacing:-0.262px;color:#1a1a1a;white-space:nowrap;-webkit-text-stroke:0.12px currentColor">Layer List</div>
<div class="a" style="left:945.5px;top:333.5px;width:175px;height:17px;background:#dadada;border-top:1px solid #c8c8c8;border-left:1px solid #e0e0e0;border-bottom:1px solid #bdbdbd"></div>
<div class="a" style="left:950px;top:338.36px;font-size:9.5px;line-height:9.5px;letter-spacing:-0.477px;color:#1a1a1a;white-space:nowrap;-webkit-text-stroke:0.12px currentColor">Command line</div>
<div class="a" style="left:946px;top:351.5px;width:174px;height:193px;background:#fff;border:1px solid #a8a8a8;border-right:none"></div>
<div class="a" style="left:950px;top:353.19px;font-size:9.7px;line-height:9.7px;letter-spacing:0px;color:#262626;white-space:nowrap;-webkit-text-stroke:0.12px #262626">Trim Two : trim2, tm2</div>
<div class="a" style="left:950px;top:364.31px;font-size:9.7px;line-height:9.7px;letter-spacing:0px;color:#262626;white-space:nowrap;-webkit-text-stroke:0.12px #262626">Trim : trim, tm</div>
<div class="a" style="left:950px;top:375.44px;font-size:9.7px;line-height:9.7px;letter-spacing:0px;color:#262626;white-space:nowrap;-webkit-text-stroke:0.12px #262626">Trim : trim, tm</div>
<div class="a" style="left:950px;top:386.56px;font-size:9.7px;line-height:9.7px;letter-spacing:0px;color:#262626;white-space:nowrap;-webkit-text-stroke:0.12px #262626">Divide : divide, cut, div</div>
<div class="a" style="left:950px;top:397.69px;font-size:9.7px;line-height:9.7px;letter-spacing:0px;color:#262626;white-space:nowrap;-webkit-text-stroke:0.12px #262626">Divide : divide, cut, div</div>
<div class="a" style="left:950px;top:408.81px;font-size:9.7px;line-height:9.7px;letter-spacing:0px;color:#262626;white-space:nowrap;-webkit-text-stroke:0.12px #262626">Divide : divide, cut, div</div>
<div class="a" style="left:950px;top:419.94px;font-size:9.7px;line-height:9.7px;letter-spacing:0px;color:#262626;white-space:nowrap;-webkit-text-stroke:0.12px #262626">Divide : divide, cut, div</div>
<div class="a" style="left:950px;top:431.06px;font-size:9.7px;line-height:9.7px;letter-spacing:0px;color:#262626;white-space:nowrap;-webkit-text-stroke:0.12px #262626">Divide : divide, cut, div</div>
<div class="a" style="left:950px;top:442.19px;font-size:9.7px;line-height:9.7px;letter-spacing:0px;color:#262626;white-space:nowrap;-webkit-text-stroke:0.12px #262626">Trim : trim, tm</div>
<div class="a" style="left:950px;top:453.31px;font-size:9.7px;line-height:9.7px;letter-spacing:0px;color:#262626;white-space:nowrap;-webkit-text-stroke:0.12px #262626">Trim : trim, tm</div>
<div class="a" style="left:950px;top:464.44px;font-size:9.7px;line-height:9.7px;letter-spacing:0px;color:#262626;white-space:nowrap;-webkit-text-stroke:0.12px #262626">Revert direction : revert, rev</div>
<div class="a" style="left:950px;top:475.56px;font-size:9.7px;line-height:9.7px;letter-spacing:0px;color:#262626;white-space:nowrap;-webkit-text-stroke:0.12px #262626">Trim : trim, tm</div>
<div class="a" style="left:950px;top:486.69px;font-size:9.7px;line-height:9.7px;letter-spacing:0px;color:#262626;white-space:nowrap;-webkit-text-stroke:0.12px #262626">Attributes : modifyattr, attr, ma</div>
<div class="a" style="left:950px;top:497.81px;font-size:9.7px;line-height:9.7px;letter-spacing:0px;color:#262626;white-space:nowrap;-webkit-text-stroke:0.12px #262626">Attributes : modifyattr, attr, ma</div>
<div class="a" style="left:950px;top:508.94px;font-size:9.7px;line-height:9.7px;letter-spacing:0px;color:#262626;white-space:nowrap;-webkit-text-stroke:0.12px #262626">Attributes : modifyattr, attr, ma</div>
<div class="a" style="left:950px;top:520.06px;font-size:9.7px;line-height:9.7px;letter-spacing:0px;color:#262626;white-space:nowrap;-webkit-text-stroke:0.12px #262626">Attributes : modifyattr, attr, ma</div>
<div class="a" style="left:950px;top:531.19px;font-size:9.7px;line-height:9.7px;letter-spacing:0px;color:#262626;white-space:nowrap;-webkit-text-stroke:0.12px #262626">5</div>
<div class="a" style="left:943px;top:556px;width:177px;height:1px;background:#c8c8c8"></div>
<div class="a" style="left:946.3px;top:546.68px;font-size:9px;line-height:9px;letter-spacing:-0.102px;color:#3b3b85;white-space:nowrap;-webkit-text-stroke:0.12px currentColor">Command:</div>
<div class="a" style="left:943px;top:556.5px;width:177px;height:17px;background:#fff"></div>
<div class="a" style="left:948.5px;top:560px;width:1px;height:11px;background:#333"></div>
<div class="a" style="left:0;top:571.5px;width:943px;height:1px;background:#b4b4b4"></div>
<div class="hdl" style="left:3px;top:577px;height:20px"></div>
<div class="a" style="left:14.2px;top:581.54px;font-size:12px;line-height:12px;letter-spacing:-1.704px;color:#1a1a1a;white-space:nowrap;-webkit-text-stroke:0.3px currentColor">Ex</div>
<div class="hl" style="left:34px;top:575px;width:80px;height:24px"></div>
<div class="a" style="left:60.5px;top:575px;width:1px;height:24px;background:#a8d2f2"></div>
<div class="a" style="left:87px;top:575px;width:1px;height:24px;background:#a8d2f2"></div>
<div class="hl" style="left:252.5px;top:575px;width:79px;height:24px"></div>
<div class="a" style="left:278.5px;top:575px;width:1px;height:24px;background:#a8d2f2"></div>
<div class="a" style="left:305px;top:575px;width:1px;height:24px;background:#a8d2f2"></div>
<div class="hl" style="left:426px;top:575px;width:27px;height:24px"></div>
<div class="vs" style="left:248.5px;top:575px;height:24px"></div>
<div class="vs" style="left:334px;top:575px;height:24px"></div>
<div class="vs" style="left:390px;top:575px;height:24px"></div>
<div class="vs" style="left:534.5px;top:575px;height:24px"></div>
<div class="vs" style="left:597.5px;top:575px;height:24px"></div>
<div class="hdl" style="left:395px;top:577px;height:20px"></div>
<div class="hdl" style="left:538.5px;top:577px;height:20px"></div>
<div class="hdl" style="left:601.5px;top:577px;height:20px"></div>
<svg class="a" style="left:38.5px;top:578px" width="18" height="18" viewBox="0 0 18 18"><path d="M9 2v14M2 9h14" stroke="#4a5a6a" stroke-width="1.1" stroke-dasharray="1.5 1"/><circle cx="9" cy="9" r="1.5" fill="none" stroke="#4a5a6a" stroke-width="0.8"/></svg>
<svg class="a" style="left:65.8px;top:578px" width="18" height="18" viewBox="0 0 18 18"><circle cx="4" cy="2.5" r="1.7" fill="#2d8a5f"/><circle cx="4" cy="6.8" r="1.7" fill="#2d8a5f"/><circle cx="4" cy="11.1" r="1.7" fill="#2d8a5f"/><circle cx="4" cy="15.399999999999999" r="1.7" fill="#2d8a5f"/><circle cx="9" cy="2.5" r="1.7" fill="#2d8a5f"/><circle cx="9" cy="6.8" r="1.7" fill="#2d8a5f"/><circle cx="9" cy="11.1" r="1.7" fill="#2d8a5f"/><circle cx="9" cy="15.399999999999999" r="1.7" fill="#2d8a5f"/><circle cx="14" cy="2.5" r="1.7" fill="#2d8a5f"/><circle cx="14" cy="6.8" r="1.7" fill="#2d8a5f"/><circle cx="14" cy="11.1" r="1.7" fill="#2d8a5f"/><circle cx="14" cy="15.399999999999999" r="1.7" fill="#2d8a5f"/></svg>
<svg class="a" style="left:91.7px;top:578px" width="18" height="18" viewBox="0 0 18 18"><path d="M4.5 5.5c4 0 7 4 9 8" fill="none" stroke="#555" stroke-width="1.3"/><circle cx="5" cy="3.5" r="1.8" fill="#cdeedd" stroke="#2d8a5f" stroke-width="1.2"/><circle cx="2" cy="6" r="1.8" fill="#cdeedd" stroke="#2d8a5f" stroke-width="1.2"/><circle cx="15.5" cy="12.5" r="1.8" fill="#cdeedd" stroke="#2d8a5f" stroke-width="1.2"/><circle cx="12.5" cy="15.5" r="1.8" fill="#cdeedd" stroke="#2d8a5f" stroke-width="1.2"/></svg>
<svg class="a" style="left:117.5px;top:578px" width="18" height="18" viewBox="0 0 18 18"><circle cx="5" cy="2.5" r="1.6" fill="#cdeedd" stroke="#2d8a5f" stroke-width="1.2"/><circle cx="2.5" cy="5" r="1.6" fill="#cdeedd" stroke="#2d8a5f" stroke-width="1.2"/><circle cx="7" cy="6" r="1.6" fill="#cdeedd" stroke="#2d8a5f" stroke-width="1.2"/><circle cx="9" cy="9" r="1.6" fill="#cdeedd" stroke="#2d8a5f" stroke-width="1.2"/><circle cx="12" cy="9" r="1.6" fill="#cdeedd" stroke="#2d8a5f" stroke-width="1.2"/><circle cx="10" cy="13" r="1.6" fill="#cdeedd" stroke="#2d8a5f" stroke-width="1.2"/><circle cx="14" cy="11" r="1.6" fill="#cdeedd" stroke="#2d8a5f" stroke-width="1.2"/></svg>
<svg class="a" style="left:144px;top:578px" width="18" height="18" viewBox="0 0 18 18"><path d="M3 5c5 1 9 5 10 11M8 1c4 2 7 5 9 9" fill="none" stroke="#555" stroke-width="1.2"/><circle cx="12" cy="6" r="1.8" fill="#cdeedd" stroke="#2d8a5f" stroke-width="1.2"/><circle cx="3.5" cy="14" r="1.8" fill="#cdeedd" stroke="#2d8a5f" stroke-width="1.2"/></svg>
<svg class="a" style="left:171.3px;top:578px" width="18" height="18" viewBox="0 0 18 18"><path d="M2 4c5 1 9 5 10 11M6 1c4 3 8 6 10 11" fill="none" stroke="#555" stroke-width="1.2"/><circle cx="10" cy="7.5" r="2" fill="#cdeedd" stroke="#2d8a5f" stroke-width="1.2"/><circle cx="8" cy="10" r="1.6" fill="#cdeedd" stroke="#2d8a5f" stroke-width="1.2"/></svg>
<svg class="a" style="left:197px;top:578px" width="18" height="18" viewBox="0 0 18 18"><path d="M2 4c5 1 9 5 10 11M6 1c4 3 8 6 10 11" fill="none" stroke="#555" stroke-width="1.2"/><circle cx="9" cy="5" r="1.6" fill="#cdeedd" stroke="#2d8a5f" stroke-width="1.2"/><circle cx="10" cy="13" r="1.6" fill="#cdeedd" stroke="#2d8a5f" stroke-width="1.2"/><path d="M13 4l3-2v4zM3 13l3-2v4z" fill="#2d8a5f"/></svg>
<svg class="a" style="left:223.5px;top:578px" width="18" height="18" viewBox="0 0 18 18"><path d="M3 3l12 12M15 3L3 15" stroke="#555" stroke-width="1.3"/><rect x="7" y="7" width="4" height="4" fill="#cdeedd" stroke="#2d8a5f" stroke-width="1.2"/></svg>
<svg class="a" style="left:256.6px;top:578px" width="18" height="18" viewBox="0 0 18 18"><path d="M1 9h16" stroke="#2d8a5f" stroke-width="1.4"/><circle cx="9" cy="9" r="2" fill="#cdeedd" stroke="#2d8a5f" stroke-width="1.2"/></svg>
<svg class="a" style="left:282.6px;top:578px" width="18" height="18" viewBox="0 0 18 18"><path d="M9 1v16" stroke="#2d8a5f" stroke-width="1.4"/><circle cx="9" cy="9" r="2" fill="#cdeedd" stroke="#2d8a5f" stroke-width="1.2"/></svg>
<svg class="a" style="left:309px;top:578px" width="18" height="18" viewBox="0 0 18 18"><path d="M1 9h16M9 1v16" stroke="#2d8a5f" stroke-width="1.4"/><circle cx="9" cy="9" r="2" fill="#2d8a5f"/></svg>
<svg class="a" style="left:340px;top:578px" width="18" height="18" viewBox="0 0 18 18"><path d="M3 13l5-5 3 3-5 5a2 2 0 0 1-3-3z" fill="#fff" stroke="#666" stroke-width="1.1"/><path d="M12 2v12M6 8h12" stroke="#2d6a4a" stroke-width="1"/><circle cx="12" cy="8" r="2.3" fill="#2d8a5f"/></svg>
<svg class="a" style="left:366.6px;top:578px" width="18" height="18" viewBox="0 0 18 18"><rect x="1" y="5" width="7" height="6" fill="#111"/><path d="M2.5 5V3.5a2 2 0 0 1 4 0V5" fill="none" stroke="#111" stroke-width="1.3"/><path d="M5 16l5-5 3 3-5 5z" fill="#fff" stroke="#666" stroke-width="1.1"/><path d="M13 7v11M8 12.5h10" stroke="#2d6a4a" stroke-width="1"/><circle cx="13" cy="12.5" r="2.3" fill="#2d8a5f"/></svg>
<svg class="a" style="left:403.8px;top:578px" width="18" height="18" viewBox="0 0 18 18"><rect x="1" y="1" width="15" height="11" fill="#fdfdfd" stroke="#333" stroke-width="1.2"/><rect x="1.6" y="1.6" width="4.5" height="9.8" fill="#2fe37f"/><rect x="6" y="1.6" width="3" height="9.8" fill="#a6f0c6"/><path d="M8.5 12v2.5M5 15h7" stroke="#111" stroke-width="1.6"/></svg>
<svg class="a" style="left:430.8px;top:578px" width="18" height="18" viewBox="0 0 18 18"><rect x="1" y="1" width="15" height="11" fill="#fdfdfd" stroke="#333" stroke-width="1.2"/><rect x="1.6" y="1.6" width="13.8" height="9.8" fill="#b8d0e0"/><path d="M8.5 12v2.5M5 15h7" stroke="#111" stroke-width="1.6"/></svg>
<svg class="a" style="left:456.8px;top:578px" width="18" height="18" viewBox="0 0 18 18"><rect x="1" y="1" width="15" height="11" fill="#fdfdfd" stroke="#333" stroke-width="1.2"/><rect x="1.6" y="1.6" width="13.8" height="3.5" fill="#2fe37f"/><rect x="1.6" y="5" width="13.8" height="2" fill="#a6f0c6"/><path d="M8.5 12v2.5M5 15h7" stroke="#111" stroke-width="1.6"/></svg>
<svg class="a" style="left:483.3px;top:578px" width="18" height="18" viewBox="0 0 18 18"><rect x="1" y="1" width="15" height="11" fill="#fdfdfd" stroke="#333" stroke-width="1.2"/><rect x="1.6" y="8" width="13.8" height="3.4" fill="#2fe37f"/><rect x="1.6" y="6" width="13.8" height="2" fill="#a6f0c6"/><path d="M8.5 12v2.5M5 15h7" stroke="#111" stroke-width="1.6"/></svg>
<svg class="a" style="left:509.8px;top:578px" width="18" height="18" viewBox="0 0 18 18"><rect x="1" y="1" width="15" height="11" fill="#fdfdfd" stroke="#333" stroke-width="1.2"/><rect x="4.5" y="3.5" width="8" height="6" fill="#2fe37f"/><path d="M8.5 12v2.5M5 15h7" stroke="#111" stroke-width="1.6"/></svg>
<svg class="a" style="left:546px;top:578px" width="18" height="18" viewBox="0 0 18 18"><path d="M4 6v7M0.5 9.5h7" stroke="#111" stroke-width="2.4"/><rect x="10" y="1" width="7" height="16" fill="#f8f8f8" stroke="#888" stroke-width="1"/><path d="M11.5 4h4M11.5 7h4M11.5 10h4M11.5 13h4" stroke="#999" stroke-width="0.8"/></svg>
<svg class="a" style="left:572.7px;top:578px" width="18" height="18" viewBox="0 0 18 18"><path d="M4 6v7M0.5 9.5h7" stroke="#111" stroke-width="2.4"/><rect x="10" y="1" width="7" height="16" fill="#e0f5e9" stroke="#888" stroke-width="1"/><path d="M11 8l5-5M11 15l5-5" stroke="#2d8a5f" stroke-width="1"/></svg>
<svg class="a" style="left:610px;top:578px" width="18" height="18" viewBox="0 0 18 18"><path d="M2 16V3l6 7V16zM8 16l6-14 3 14z" fill="none" stroke="#333" stroke-width="1.2"/><ellipse cx="8" cy="11" rx="3" ry="2" fill="#2fbf70"/></svg>
<svg class="a" style="left:637.2px;top:578px" width="18" height="18" viewBox="0 0 18 18"><path d="M1.5 1.5h7v10h-7z" fill="#fafafa" stroke="#444" stroke-width="1.1"/><path d="M6.5 8.5h9v8h-9z" fill="#fafafa" stroke="#444" stroke-width="1.1"/><circle cx="2.5" cy="14.5" r="1.6" fill="#2d8a5f"/><path d="M4 4l3 3" stroke="#222" stroke-width="1"/></svg>
<svg class="a" style="left:662.7px;top:578px" width="18" height="18" viewBox="0 0 18 18"><rect x="3" y="6" width="8" height="11" rx="1" fill="#fafafa" stroke="#444" stroke-width="1.2"/><path d="M7 2h8v14" fill="none" stroke="#444" stroke-width="1.2"/><path d="M12 2h3v3z" fill="#2fbf70"/></svg>
<svg class="a" style="left:689.5px;top:578px" width="18" height="18" viewBox="0 0 18 18"><path d="M8 2L1.5 16H8zM10 2l6.5 14H10z" fill="none" stroke="#444" stroke-width="1.2"/><path d="M9 0v18" stroke="#888" stroke-width="0.8" stroke-dasharray="1 1"/></svg>
<svg class="a" style="left:716px;top:578px" width="18" height="18" viewBox="0 0 18 18"><path d="M13 3A7 7 0 1 0 16 9" fill="none" stroke="#444" stroke-width="1.3"/><circle cx="9" cy="9.5" r="5" fill="#d0f2e0"/><path d="M9 5.5v8M5 9.5h8" stroke="#2f9a62" stroke-width="2.2"/><circle cx="13" cy="3" r="1.2" fill="#222"/></svg>
<svg class="a" style="left:742.7px;top:578px" width="18" height="18" viewBox="0 0 18 18"><path d="M1.5 1.5h8v6h-8zM7.5 8.5h9v7h-9z" fill="#fafafa" stroke="#444" stroke-width="1.1"/><circle cx="4" cy="11" r="1.7" fill="#2d8a5f"/><path d="M4 3l3 3M12 11l1.5 2" stroke="#222" stroke-width="1"/></svg>
<svg class="a" style="left:769px;top:578px" width="18" height="18" viewBox="0 0 18 18"><path d="M4 14l10-10" stroke="#555" stroke-width="1.2"/><circle cx="3.5" cy="14.5" r="2" fill="#cdeedd" stroke="#2d8a5f" stroke-width="1.2"/><circle cx="14.5" cy="3.5" r="2" fill="#cdeedd" stroke="#2d8a5f" stroke-width="1.2"/><path d="M6 8l2-2M10 12l2-2" stroke="#222" stroke-width="1"/></svg>
<svg class="a" style="left:795.5px;top:578px" width="18" height="18" viewBox="0 0 18 18"><path d="M2 2l14 11M3 16l13-11" stroke="#555" stroke-width="1.2"/><path d="M9 7v5" stroke="#222" stroke-width="2"/></svg>
<svg class="a" style="left:822.7px;top:578px" width="18" height="18" viewBox="0 0 18 18"><path d="M2 2l10 8M2 16l10-8" stroke="#555" stroke-width="1.2"/><path d="M8 8l4 1-4 2z" fill="#222"/></svg>
<svg class="a" style="left:848.8px;top:578px" width="18" height="18" viewBox="0 0 18 18"><path d="M2 16L15 4" stroke="#555" stroke-width="1.2"/><path d="M7 5l3 2M14 3l3-1-1 3z" fill="#333" stroke="#333" stroke-width="1"/></svg>
<svg class="a" style="left:875.3px;top:578px" width="18" height="18" viewBox="0 0 18 18"><path d="M1 3c7 0 14 6 15 14M1 7c5 0 11 4 12 10M1 11c3 0 8 2 8 6" fill="none" stroke="#555" stroke-width="1.2"/></svg>
<svg class="a" style="left:902px;top:578px" width="18" height="18" viewBox="0 0 18 18"><path d="M1.5 1.5h9l6 6v9h-15z" fill="#fafafa" stroke="#444" stroke-width="1.2"/><path d="M5 2l11 11" stroke="#2fd57a" stroke-width="3.5"/><path d="M11 1.5v2M14 4v2" stroke="#666" stroke-width="0.8"/></svg>
<svg class="a" style="left:928.3px;top:578px" width="18" height="18" viewBox="0 0 18 18"><path d="M1.5 1.5h8a7 7 0 0 1 7 7v8h-15z" fill="#fafafa" stroke="#444" stroke-width="1.2"/><path d="M9.5 1.5a7 7 0 0 1 7 7h-3a4 4 0 0 0-4-4z" fill="#2fd57a"/><circle cx="6" cy="12" r="1.2" fill="#111"/></svg>
<svg class="a" style="left:955px;top:578px" width="18" height="18" viewBox="0 0 18 18"><path d="M2 4v12h14" fill="none" stroke="#333" stroke-width="1.3" stroke-dasharray="2 1.5"/><path d="M3 13c4-4 8-6 12-8M6 15l9-9" fill="none" stroke="#2f8a5a" stroke-width="1.3"/><path d="M13 2h4v4" fill="none" stroke="#555" stroke-width="1" stroke-dasharray="1.5 1"/></svg>
<svg class="a" style="left:981.4px;top:578px" width="18" height="18" viewBox="0 0 18 18"><path d="M1.5 1.5h8v15h-8z" fill="#fafafa" stroke="#444" stroke-width="1.2"/><path d="M10 1.5h6v15h-6" fill="none" stroke="#555" stroke-width="1" stroke-dasharray="1.5 1.2"/><path d="M5 9l4-3.5 4 3.5-4 3.5z" fill="#2fd57a" stroke="#2d6a4a" stroke-width="1"/></svg>
<svg class="a" style="left:1008.3px;top:578px" width="18" height="18" viewBox="0 0 18 18"><rect x="2.5" y="2.5" width="13" height="13" fill="#fafafa" stroke="#333" stroke-width="1.4"/><circle cx="2.5" cy="2.5" r="2.2" fill="#2d8a5f"/><circle cx="15.5" cy="2.5" r="2.2" fill="#2d8a5f"/><circle cx="2.5" cy="15.5" r="2.2" fill="#2d8a5f"/><circle cx="15.5" cy="15.5" r="2.2" fill="#2d8a5f"/><circle cx="7" cy="11" r="2" fill="none" stroke="#555"/></svg>
<svg class="a" style="left:1035.4px;top:578px" width="18" height="18" viewBox="0 0 18 18"><path d="M3 12l8-9 4 4-8 9H3z" fill="#2fe37f" stroke="#2d6a4a" stroke-width="1.1"/><path d="M3 16l3-1" stroke="#333" stroke-width="1"/></svg>
<svg class="a" style="left:1061px;top:578px" width="18" height="18" viewBox="0 0 18 18"><path d="M1 12.5c2 1 4 .5 5-1.5M4.5 12c1-2 2.5-2 3-1s-.5 2-1.5 2M8 5v7.5h3M11 5.5v7c0 .5 1 .5 2 0s1-2 0-2.5M14 11.5c1 1.5 3 1.5 4 0M16.5 8c1 0 1.5 1 1 2" fill="none" stroke="#222" stroke-width="1.5"/><circle cx="9" cy="15.5" r=".8" fill="#333"/><circle cx="12" cy="3" r=".7" fill="#555"/></svg>
<svg class="a" style="left:1087.5px;top:578px" width="18" height="18" viewBox="0 0 18 18"><rect x="4" y="4" width="10" height="10" fill="none" stroke="#444" stroke-width="1.1"/><rect x="2" y="2" width="4" height="4" fill="#1f8a55" stroke="#7fe0b0" stroke-width="0.6"/><rect x="12" y="2" width="4" height="4" fill="#1f8a55" stroke="#7fe0b0" stroke-width="0.6"/><rect x="2" y="12" width="4" height="4" fill="#1f8a55" stroke="#7fe0b0" stroke-width="0.6"/><rect x="12" y="12" width="4" height="4" fill="#1f8a55" stroke="#7fe0b0" stroke-width="0.6"/></svg>
<svg class="a" style="left:1114px;top:578px" width="18" height="18" viewBox="0 0 18 18"><path d="M2 2v14M2 2h3M2 9h3" fill="none" stroke="#333" stroke-width="1.2" stroke-dasharray="1.5 1"/></svg>
<div class="a" style="left:4.5px;top:606.88px;font-size:10.3px;line-height:10.3px;letter-spacing:-0.489px;color:#1a1a1a;white-space:nowrap;-webkit-text-stroke:0.12px currentColor">64.6235 , -1.3230</div>
<div class="a" style="left:4.5px;top:618.68px;font-size:10.3px;line-height:10.3px;letter-spacing:-0.496px;color:#1a1a1a;white-space:nowrap;-webkit-text-stroke:0.12px currentColor">64.6370 &lt; 358.8272°</div>
<div class="a" style="left:169.4px;top:606.88px;font-size:10.3px;line-height:10.3px;letter-spacing:-0.427px;color:#1a1a1a;white-space:nowrap;-webkit-text-stroke:0.12px currentColor">-12.3765 , -6.3230</div>
<div class="a" style="left:169.4px;top:618.68px;font-size:10.3px;line-height:10.3px;letter-spacing:-0.507px;color:#1a1a1a;white-space:nowrap;-webkit-text-stroke:0.12px currentColor">13.8981 &lt; 207.0619°</div>
<div class="a" style="left:594.5px;top:606.88px;font-size:10.3px;line-height:10.3px;letter-spacing:-0.482px;color:#1a1a1a;white-space:nowrap;-webkit-text-stroke:0.12px currentColor">Selected</div>
<div class="a" style="left:594.5px;top:618.68px;font-size:10.3px;line-height:10.3px;letter-spacing:0px;color:#1a1a1a;white-space:nowrap;-webkit-text-stroke:0.12px currentColor">0</div>
<div class="a" style="left:635.2px;top:606.88px;font-size:10.3px;line-height:10.3px;letter-spacing:-0.228px;color:#1a1a1a;white-space:nowrap;-webkit-text-stroke:0.12px currentColor">Total Length</div>
<div class="a" style="left:635.2px;top:618.68px;font-size:10.3px;line-height:10.3px;letter-spacing:0px;color:#1a1a1a;white-space:nowrap;-webkit-text-stroke:0.12px currentColor">0</div>
<div class="a" style="left:696.8px;top:606.88px;font-size:10.3px;line-height:10.3px;letter-spacing:-0.254px;color:#1a1a1a;white-space:nowrap;-webkit-text-stroke:0.12px currentColor">Current Layer</div>
<div class="a" style="left:696.8px;top:618.68px;font-size:10.3px;line-height:10.3px;letter-spacing:0.028px;color:#1a1a1a;white-space:nowrap;-webkit-text-stroke:0.12px currentColor">continous</div>
<div class="a" style="left:800.9px;top:606.88px;font-size:10.3px;line-height:10.3px;letter-spacing:-0.4px;color:#1a1a1a;white-space:nowrap;-webkit-text-stroke:0.12px currentColor">Grid Status</div>
<div class="a" style="left:800.9px;top:618.68px;font-size:10.3px;line-height:10.3px;letter-spacing:-0.374px;color:#1a1a1a;white-space:nowrap;-webkit-text-stroke:0.12px currentColor">10 / 100</div>
<div class="a" style="left:162px;top:603px;width:1px;height:27px;background:#d5d5d5"></div>
<div class="a" style="left:327px;top:603px;width:1px;height:27px;background:#d5d5d5"></div>
<div class="a" style="left:590.5px;top:603px;width:1px;height:27px;background:#d5d5d5"></div>
<div class="a" style="left:692.5px;top:603px;width:1px;height:27px;background:#d5d5d5"></div>
<div class="a" style="left:793.5px;top:603px;width:1px;height:27px;background:#d5d5d5"></div>
<div class="a" style="left:853px;top:603px;width:1px;height:27px;background:#d5d5d5"></div>
<svg class="a" style="left:450px;top:606px" width="20" height="20" viewBox="0 0 20 20"><path d="M8.5 9V8a4 3.5 0 0 1 9 0v7.5a3.3 3.3 0 0 1-3.3 3.3h-2.4a3.3 3.3 0 0 1-3.3-3.3z" fill="#fafafa" stroke="#555" stroke-width="1.1"/><path d="M8.8 8a4 3.5 0 0 1 8.4 0v2.3H8.8z" fill="#bdf2d6"/><rect x="11.3" y="5" width="3.2" height="5.5" fill="#2fbf70"/><path d="M8.5 10.5h9" stroke="#333" stroke-width="1"/><path d="M2.5 6.3l3 2.5 3.5-4.5c1-1 2.5-1 3.5 0" fill="none" stroke="#666" stroke-width="1"/></svg>
</body></html>
